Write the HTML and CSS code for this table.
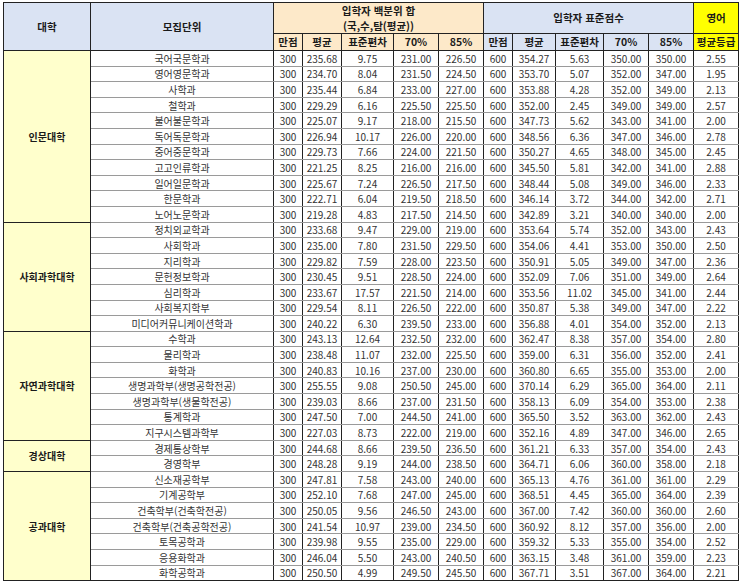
FILE: index.html
```html
<!DOCTYPE html>
<html lang="ko">
<head>
<meta charset="utf-8">
<title>입학자 성적</title>
<link rel="stylesheet" href="styles.css">
</head>
<body>
<table class="grid">
<colgroup>
<col class="c-college"><col class="c-dept">
<col class="c-max"><col class="c-avg"><col class="c-sd"><col class="c-p"><col class="c-p">
<col class="c-max"><col class="c-avg2"><col class="c-sd2"><col class="c-p"><col class="c-p">
<col class="c-eng">
</colgroup>
<thead>
<tr class="hr1">
<th rowspan="2" class="h-blue">대학</th>
<th rowspan="2" class="h-blue">모집단위</th>
<th colspan="5" class="h-peach"><div class="two">입학자 백분위 합<br>(국,수,탐(평균))</div></th>
<th colspan="5" class="h-blue">입학자 표준점수</th>
<th class="h-yellow">영어</th>
</tr>
<tr class="hr2">
<th class="h-peach">만점</th><th class="h-peach">평균</th><th class="h-peach">표준편차</th><th class="h-peach">70%</th><th class="h-peach">85%</th>
<th class="h-blue">만점</th><th class="h-blue">평균</th><th class="h-blue">표준편차</th><th class="h-blue">70%</th><th class="h-blue">85%</th>
<th class="h-yellow">평균등급</th>
</tr>
</thead>
<tbody>
<tr><td rowspan="11" class="college">인문대학</td><td>국어국문학과</td><td>300</td><td>235.68</td><td>9.75</td><td>231.00</td><td>226.50</td><td>600</td><td>354.27</td><td>5.63</td><td>350.00</td><td>350.00</td><td>2.55</td></tr>
<tr><td>영어영문학과</td><td>300</td><td>234.70</td><td>8.04</td><td>231.50</td><td>224.50</td><td>600</td><td>353.70</td><td>5.07</td><td>352.00</td><td>347.00</td><td>1.95</td></tr>
<tr><td>사학과</td><td>300</td><td>235.44</td><td>6.84</td><td>233.00</td><td>227.00</td><td>600</td><td>353.88</td><td>4.28</td><td>352.00</td><td>349.00</td><td>2.13</td></tr>
<tr><td>철학과</td><td>300</td><td>229.29</td><td>6.16</td><td>225.50</td><td>225.50</td><td>600</td><td>352.00</td><td>2.45</td><td>349.00</td><td>349.00</td><td>2.57</td></tr>
<tr><td>불어불문학과</td><td>300</td><td>225.07</td><td>9.17</td><td>218.00</td><td>215.50</td><td>600</td><td>347.73</td><td>5.62</td><td>343.00</td><td>341.00</td><td>2.00</td></tr>
<tr><td>독어독문학과</td><td>300</td><td>226.94</td><td>10.17</td><td>226.00</td><td>220.00</td><td>600</td><td>348.56</td><td>6.36</td><td>347.00</td><td>346.00</td><td>2.78</td></tr>
<tr><td>중어중문학과</td><td>300</td><td>229.73</td><td>7.66</td><td>224.00</td><td>221.50</td><td>600</td><td>350.27</td><td>4.65</td><td>348.00</td><td>345.00</td><td>2.45</td></tr>
<tr><td>고고인류학과</td><td>300</td><td>221.25</td><td>8.25</td><td>216.00</td><td>216.00</td><td>600</td><td>345.50</td><td>5.81</td><td>342.00</td><td>341.00</td><td>2.88</td></tr>
<tr><td>일어일문학과</td><td>300</td><td>225.67</td><td>7.24</td><td>226.50</td><td>217.50</td><td>600</td><td>348.44</td><td>5.08</td><td>349.00</td><td>346.00</td><td>2.33</td></tr>
<tr><td>한문학과</td><td>300</td><td>222.71</td><td>6.04</td><td>219.50</td><td>218.50</td><td>600</td><td>346.14</td><td>3.72</td><td>344.00</td><td>342.00</td><td>2.71</td></tr>
<tr><td>노어노문학과</td><td>300</td><td>219.28</td><td>4.83</td><td>217.50</td><td>214.50</td><td>600</td><td>342.89</td><td>3.21</td><td>340.00</td><td>340.00</td><td>2.00</td></tr>
<tr><td rowspan="7" class="college">사회과학대학</td><td>정치외교학과</td><td>300</td><td>233.68</td><td>9.47</td><td>229.00</td><td>219.00</td><td>600</td><td>353.64</td><td>5.74</td><td>352.00</td><td>343.00</td><td>2.43</td></tr>
<tr><td>사회학과</td><td>300</td><td>235.00</td><td>7.80</td><td>231.50</td><td>229.50</td><td>600</td><td>354.06</td><td>4.41</td><td>353.00</td><td>350.00</td><td>2.50</td></tr>
<tr><td>지리학과</td><td>300</td><td>229.82</td><td>7.59</td><td>228.00</td><td>223.50</td><td>600</td><td>350.91</td><td>5.05</td><td>349.00</td><td>347.00</td><td>2.36</td></tr>
<tr><td>문헌정보학과</td><td>300</td><td>230.45</td><td>9.51</td><td>228.50</td><td>224.00</td><td>600</td><td>352.09</td><td>7.06</td><td>351.00</td><td>349.00</td><td>2.64</td></tr>
<tr><td>심리학과</td><td>300</td><td>233.67</td><td>17.57</td><td>221.50</td><td>214.00</td><td>600</td><td>353.56</td><td>11.02</td><td>345.00</td><td>341.00</td><td>2.44</td></tr>
<tr><td>사회복지학부</td><td>300</td><td>229.54</td><td>8.11</td><td>226.50</td><td>222.00</td><td>600</td><td>350.87</td><td>5.38</td><td>349.00</td><td>347.00</td><td>2.22</td></tr>
<tr><td>미디어커뮤니케이션학과</td><td>300</td><td>240.22</td><td>6.30</td><td>239.50</td><td>233.00</td><td>600</td><td>356.88</td><td>4.01</td><td>354.00</td><td>352.00</td><td>2.13</td></tr>
<tr><td rowspan="7" class="college">자연과학대학</td><td>수학과</td><td>300</td><td>243.13</td><td>12.64</td><td>232.50</td><td>232.00</td><td>600</td><td>362.47</td><td>8.38</td><td>357.00</td><td>354.00</td><td>2.80</td></tr>
<tr><td>물리학과</td><td>300</td><td>238.48</td><td>11.07</td><td>232.00</td><td>225.50</td><td>600</td><td>359.00</td><td>6.31</td><td>356.00</td><td>352.00</td><td>2.41</td></tr>
<tr><td>화학과</td><td>300</td><td>240.83</td><td>10.16</td><td>237.00</td><td>230.00</td><td>600</td><td>360.80</td><td>6.65</td><td>355.00</td><td>353.00</td><td>2.00</td></tr>
<tr><td>생명과학부(생명공학전공)</td><td>300</td><td>255.55</td><td>9.08</td><td>250.50</td><td>245.00</td><td>600</td><td>370.14</td><td>6.29</td><td>365.00</td><td>364.00</td><td>2.11</td></tr>
<tr><td>생명과학부(생물학전공)</td><td>300</td><td>239.03</td><td>8.66</td><td>237.00</td><td>231.50</td><td>600</td><td>358.13</td><td>6.09</td><td>354.00</td><td>353.00</td><td>2.38</td></tr>
<tr><td>통계학과</td><td>300</td><td>247.50</td><td>7.00</td><td>244.50</td><td>241.00</td><td>600</td><td>365.50</td><td>3.52</td><td>363.00</td><td>362.00</td><td>2.43</td></tr>
<tr><td>지구시스템과학부</td><td>300</td><td>227.03</td><td>8.73</td><td>222.00</td><td>219.00</td><td>600</td><td>352.16</td><td>4.89</td><td>347.00</td><td>346.00</td><td>2.65</td></tr>
<tr><td rowspan="2" class="college">경상대학</td><td>경제통상학부</td><td>300</td><td>244.68</td><td>8.66</td><td>239.50</td><td>236.50</td><td>600</td><td>361.21</td><td>6.33</td><td>357.00</td><td>354.00</td><td>2.43</td></tr>
<tr><td>경영학부</td><td>300</td><td>248.28</td><td>9.19</td><td>244.00</td><td>238.50</td><td>600</td><td>364.71</td><td>6.06</td><td>360.00</td><td>358.00</td><td>2.18</td></tr>
<tr><td rowspan="7" class="college">공과대학</td><td>신소재공학부</td><td>300</td><td>247.81</td><td>7.58</td><td>243.00</td><td>240.00</td><td>600</td><td>365.13</td><td>4.76</td><td>361.00</td><td>361.00</td><td>2.29</td></tr>
<tr><td>기계공학부</td><td>300</td><td>252.10</td><td>7.68</td><td>247.00</td><td>245.00</td><td>600</td><td>368.51</td><td>4.45</td><td>365.00</td><td>364.00</td><td>2.39</td></tr>
<tr><td>건축학부(건축학전공)</td><td>300</td><td>250.05</td><td>9.56</td><td>246.50</td><td>243.00</td><td>600</td><td>367.00</td><td>7.42</td><td>360.00</td><td>360.00</td><td>2.60</td></tr>
<tr><td>건축학부(건축공학전공)</td><td>300</td><td>241.54</td><td>10.97</td><td>239.00</td><td>234.50</td><td>600</td><td>360.92</td><td>8.12</td><td>357.00</td><td>356.00</td><td>2.00</td></tr>
<tr><td>토목공학과</td><td>300</td><td>239.98</td><td>9.55</td><td>235.00</td><td>229.00</td><td>600</td><td>359.32</td><td>5.33</td><td>355.00</td><td>354.00</td><td>2.52</td></tr>
<tr><td>응용화학과</td><td>300</td><td>246.04</td><td>5.50</td><td>243.00</td><td>240.50</td><td>600</td><td>363.15</td><td>3.48</td><td>361.00</td><td>359.00</td><td>2.23</td></tr>
<tr><td>화학공학과</td><td>300</td><td>250.50</td><td>4.99</td><td>249.50</td><td>245.50</td><td>600</td><td>367.71</td><td>3.51</td><td>367.00</td><td>364.00</td><td>2.21</td></tr>
</tbody>
</table>
</body>
</html>
```
FILE: styles.css
```css
html, body {
  margin: 0;
  background: #ffffff;
}
body {
  padding: 2px 0 0 3px;
  font-family: "Noto Sans CJK KR", "Noto Sans", sans-serif;
  font-size: 10px;
  color: #333333;
}
.grid {
  border-collapse: collapse;
  table-layout: fixed;
  width: 735px;
}
.c-college { width: 87px; }
.c-dept { width: 183px; }
.c-max { width: 29px; }
.c-avg { width: 39px; }
.c-sd { width: 52px; }
.c-p { width: 45px; }
.c-avg2 { width: 43px; }
.c-sd2 { width: 48px; }
.c-eng { width: 45px; }

.grid th,
.grid td {
  border: 1px solid #222222;
  padding: 0;
  text-align: center;
  vertical-align: middle;
  white-space: nowrap;
  overflow: hidden;
}
.grid th {
  font-size: 10.5px;
  font-weight: 700;
  color: #1a1a1a;
}
.hr1 th { height: 30px; line-height: 14px; }
.hr2 th { height: 16px; line-height: 14px; }
.two { line-height: 15px; }

.h-blue { background: #dae3f3; }
.h-peach { background: #fde9c9; }
.h-yellow { background: #ffff00; }

.grid tbody td {
  height: 14.6px;
  line-height: 13px;
  border-top-color: #9a9a9a;
  border-bottom-color: #9a9a9a;
}
.grid tbody td.college {
  background: #ffffcc;
  font-weight: 700;
  color: #1a1a1a;
  border-color: #222222;
}
.grid tbody tr:last-child td {
  border-bottom-color: #222222;
}
```
